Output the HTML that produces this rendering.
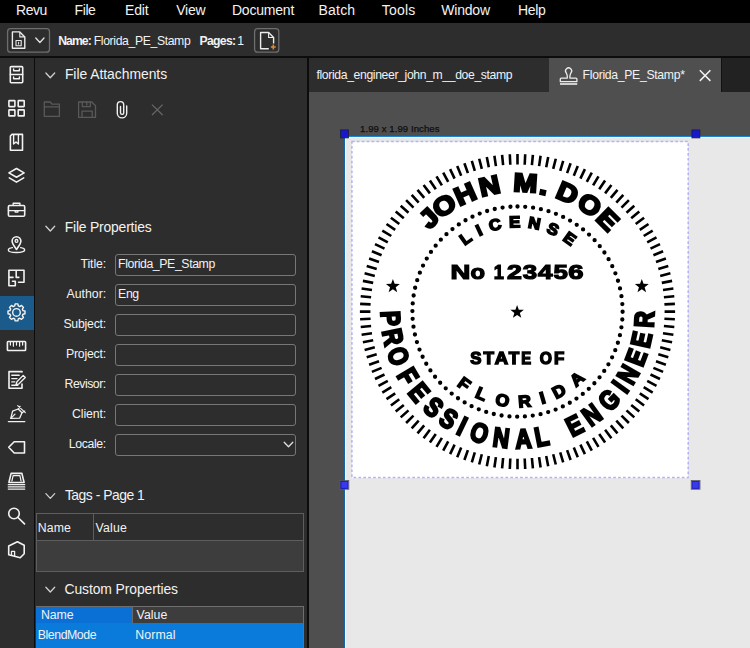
<!DOCTYPE html><html><head><meta charset="utf-8"><title>Revu</title><style>
*{box-sizing:border-box;margin:0;padding:0}
html,body{width:750px;height:648px;overflow:hidden;background:#2b2b2b}
body{font-family:"Liberation Sans",sans-serif;color:#f2f2f2;position:relative;font-size:12px}
.a{position:absolute}
.t{position:absolute;white-space:nowrap}
.inp{position:absolute;left:114.500px;width:181px;height:21.500px;border:1.4px solid #777;border-radius:3px;background:#2d2d2d}
svg{position:absolute;left:0;top:0;overflow:visible}
</style></head><body>
<div class="a" style="left:0px;top:0px;width:750px;height:23px;background:#000;"></div>
<div class="a" style="left:0px;top:23px;width:750px;height:33px;background:#2d2d2d;"></div>
<div class="a" style="left:0px;top:56px;width:750px;height:2px;background:#0c0c0c;"></div>
<div class="a" style="left:0px;top:58px;width:34px;height:590px;background:#2d2d2d;"></div>
<div class="a" style="left:34px;top:58px;width:1.4px;height:590px;background:#0c0c0c;"></div>
<div class="a" style="left:35.4px;top:58px;width:271.6px;height:590px;background:#2d2d2d;"></div>
<div class="a" style="left:307px;top:58px;width:2px;height:590px;background:#0c0c0c;"></div>
<div class="a" style="left:309px;top:58px;width:240px;height:34px;background:#2d2d2d;"></div>
<div class="a" style="left:549px;top:58px;width:172px;height:34px;background:#4f4f4f;"></div>
<div class="a" style="left:721px;top:58px;width:29px;height:34px;background:#222;"></div>
<div class="a" style="left:720.5px;top:58px;width:1px;height:33.5px;background:#111;"></div>
<div class="a" style="left:309px;top:91.5px;width:441px;height:556.5px;background:#4f4f4f;"></div>
<div class="a" style="left:0px;top:295.8px;width:34px;height:34.1px;background:#1a5b8b;"></div>
<div class="a" style="left:344px;top:136px;width:406px;height:512px;background:#e8e8e8;"></div>
<div class="a" style="left:344px;top:136px;width:406px;height:1px;background:#1c86cf;"></div>
<div class="a" style="left:344px;top:136px;width:1px;height:512px;background:#1168a8;"></div>
<div class="a" style="left:345px;top:137px;width:405px;height:1px;background:#fafafa;"></div>
<div class="a" style="left:345px;top:137px;width:1px;height:511px;background:#fafafa;"></div>
<div class="a" style="left:352px;top:141.5px;width:336px;height:336px;background:#fff;"></div>
<div class="t" style="left:16.09px;top:3.35px;font-size:14px;line-height:14px;letter-spacing:-0.488px;color:#f2f2f2;">Revu</div>
<div class="t" style="left:74.59px;top:3.35px;font-size:14px;line-height:14px;letter-spacing:-0.413px;color:#f2f2f2;">File</div>
<div class="t" style="left:124.99px;top:3.35px;font-size:14px;line-height:14px;letter-spacing:-0.168px;color:#f2f2f2;">Edit</div>
<div class="t" style="left:176.19px;top:3.35px;font-size:14px;line-height:14px;letter-spacing:-0.224px;color:#f2f2f2;">View</div>
<div class="t" style="left:231.89px;top:3.35px;font-size:14px;line-height:14px;letter-spacing:-0.198px;color:#f2f2f2;">Document</div>
<div class="t" style="left:318.59px;top:3.35px;font-size:14px;line-height:14px;letter-spacing:0.180px;color:#f2f2f2;">Batch</div>
<div class="t" style="left:381.79px;top:3.35px;font-size:14px;line-height:14px;letter-spacing:0.184px;color:#f2f2f2;">Tools</div>
<div class="t" style="left:441.29px;top:3.35px;font-size:14px;line-height:14px;letter-spacing:-0.215px;color:#f2f2f2;">Window</div>
<div class="t" style="left:518.09px;top:3.35px;font-size:14px;line-height:14px;letter-spacing:-0.391px;color:#f2f2f2;">Help</div>
<div class="t" style="left:58.21px;top:35.07px;font-size:12.2px;line-height:12.2px;letter-spacing:-0.926px;color:#f2f2f2;font-weight:700;">Name:</div>
<div class="t" style="left:93.71px;top:35.07px;font-size:12.2px;line-height:12.2px;letter-spacing:-0.354px;color:#f2f2f2;">Florida_PE_Stamp</div>
<div class="t" style="left:199.61px;top:35.07px;font-size:12.2px;line-height:12.2px;letter-spacing:-0.704px;color:#f2f2f2;font-weight:700;">Pages:</div>
<div class="t" style="left:237.21px;top:35.07px;font-size:12.2px;line-height:12.2px;letter-spacing:0.000px;color:#f2f2f2;">1</div>
<div class="t" style="left:316.51px;top:68.97px;font-size:12.2px;line-height:12.2px;letter-spacing:-0.362px;color:#f2f2f2;">florida_engineer_john_m__doe_stamp</div>
<div class="t" style="left:582.61px;top:68.97px;font-size:12.2px;line-height:12.2px;letter-spacing:-0.297px;color:#f2f2f2;">Florida_PE_Stamp*</div>
<div class="t" style="left:360.08px;top:123.77px;font-size:9.6px;line-height:9.6px;letter-spacing:0.064px;color:#101010;-webkit-text-stroke:.25px #101010;">1.99 x 1.99 Inches</div>
<div class="t" style="left:64.90px;top:68.13px;font-size:13.9px;line-height:13.9px;letter-spacing:-0.030px;color:#f2f2f2;">File Attachments</div>
<div class="t" style="left:64.70px;top:221.33px;font-size:13.9px;line-height:13.9px;letter-spacing:-0.186px;color:#f2f2f2;">File Properties</div>
<div class="t" style="left:64.90px;top:489.33px;font-size:13.9px;line-height:13.9px;letter-spacing:-0.489px;color:#f2f2f2;">Tags - Page 1</div>
<div class="t" style="left:64.50px;top:582.63px;font-size:13.9px;line-height:13.9px;letter-spacing:-0.094px;color:#f2f2f2;">Custom Properties</div>
<div class="inp" style="top:254.2px"></div>
<div class="t" style="left:80.50px;top:258.09px;font-size:12.3px;line-height:12.3px;letter-spacing:-0.100px;color:#f2f2f2;">Title:</div>
<div class="inp" style="top:284.2px"></div>
<div class="t" style="left:66.60px;top:288.09px;font-size:12.3px;line-height:12.3px;letter-spacing:-0.010px;color:#f2f2f2;">Author:</div>
<div class="inp" style="top:314.2px"></div>
<div class="t" style="left:63.40px;top:318.09px;font-size:12.3px;line-height:12.3px;letter-spacing:-0.235px;color:#f2f2f2;">Subject:</div>
<div class="inp" style="top:344.2px"></div>
<div class="t" style="left:65.90px;top:348.09px;font-size:12.3px;line-height:12.3px;letter-spacing:-0.200px;color:#f2f2f2;">Project:</div>
<div class="inp" style="top:374.2px"></div>
<div class="t" style="left:64.60px;top:378.09px;font-size:12.3px;line-height:12.3px;letter-spacing:-0.502px;color:#f2f2f2;">Revisor:</div>
<div class="inp" style="top:404.2px"></div>
<div class="t" style="left:72.10px;top:408.09px;font-size:12.3px;line-height:12.3px;letter-spacing:-0.128px;color:#f2f2f2;">Client:</div>
<div class="inp" style="top:434.2px"></div>
<div class="t" style="left:68.80px;top:438.09px;font-size:12.3px;line-height:12.3px;letter-spacing:-0.377px;color:#f2f2f2;">Locale:</div>
<div class="t" style="left:118.10px;top:258.09px;font-size:12.3px;line-height:12.3px;letter-spacing:-0.402px;color:#f2f2f2;">Florida_PE_Stamp</div>
<div class="t" style="left:118.10px;top:288.09px;font-size:12.3px;line-height:12.3px;letter-spacing:-0.393px;color:#f2f2f2;">Eng</div>
<div class="a" style="left:35.5px;top:513.3px;width:268.7px;height:27.7px;background:#2d2d2d;border:1px solid #5e5e5e"></div>
<div class="a" style="left:93px;top:514px;width:1px;height:27px;background:#5e5e5e;"></div>
<div class="a" style="left:35.5px;top:541px;width:268.7px;height:31px;background:#3d3d3d;border:1px solid #5e5e5e;border-top:none"></div>
<div class="t" style="left:37.70px;top:521.89px;font-size:12.3px;line-height:12.3px;letter-spacing:0.130px;color:#f2f2f2;">Name</div>
<div class="t" style="left:95.60px;top:521.89px;font-size:12.3px;line-height:12.3px;letter-spacing:0.188px;color:#f2f2f2;">Value</div>
<div class="a" style="left:35.5px;top:606.3px;width:268.7px;height:41.7px;background:#3d3d3d;border:1px solid #6e6e6e;border-bottom:none"></div>
<div class="a" style="left:35.5px;top:607.3px;width:96px;height:15.7px;background:#0b70d5;"></div>
<div class="a" style="left:131.5px;top:607.3px;width:1px;height:15.7px;background:#6a6a6a;"></div>
<div class="a" style="left:35.5px;top:623.2px;width:267.7px;height:25px;background:#0a7bdb;"></div>
<div class="t" style="left:41.00px;top:608.79px;font-size:12.3px;line-height:12.3px;letter-spacing:-0.104px;color:#f2f2f2;">Name</div>
<div class="t" style="left:136.60px;top:608.79px;font-size:12.3px;line-height:12.3px;letter-spacing:0.038px;color:#f2f2f2;">Value</div>
<div class="t" style="left:37.80px;top:629.49px;font-size:12.3px;line-height:12.3px;letter-spacing:-0.441px;color:#f2f2f2;">BlendMode</div>
<div class="t" style="left:135.30px;top:629.49px;font-size:12.3px;line-height:12.3px;letter-spacing:0.092px;color:#f2f2f2;">Normal</div>
<svg width="750" height="648" viewBox="0 0 750 648">
<rect x="7.600" y="28.700" width="41.900" height="23.500" rx="3" fill="none" stroke="#6e6e6e" stroke-width="1.300"/>
<g stroke="#ececec" fill="none" stroke-width="1.400" stroke-linejoin="round"><path d="M12.400 31.900h7.400l5 5V48.300H12.400Z"/><path d="M19.800 31.900v5h5" stroke-width="1.100"/><rect x="16" y="40.500" width="5.200" height="5.200" stroke-width="1.100"/><path d="M18.600 41.800v2.800" stroke-width="1"/></g>
<path d="M35.80 38.10L39.90 42.50L44.00 38.10" fill="none" stroke="#dedede" stroke-width="1.4" stroke-linecap="round" stroke-linejoin="round"/>
<rect x="254.600" y="28.700" width="24.200" height="23.500" rx="3" fill="none" stroke="#6e6e6e" stroke-width="1.300"/>
<g stroke="#ececec" fill="none" stroke-width="1.400" stroke-linejoin="round"><path d="M273.600 43.500V37.500l-5-5H260.600V48.700H268.800"/><path d="M268.600 32.500v5h5" stroke-width="1.100"/></g>
<path d="M273.300 44.600v4.800M270.900 47h4.800" stroke="#e08a32" stroke-width="1.500"/>
<g stroke="#f2f2f2" fill="none" stroke-width="1.6" stroke-linejoin="round" stroke-linecap="round"><rect x="10.300" y="66.600" width="12.400" height="16.200" rx="1"/><path d="M10.300 74.500H22.700M13.600 69v1.700h5.800V69M13.600 77v1.700h5.800V77" stroke-width="1.400"/></g>
<g stroke="#f2f2f2" fill="none" stroke-width="1.6" stroke-linejoin="round" stroke-linecap="round"><rect x="8.900" y="100.600" width="6" height="6" rx=".5"/><rect x="18.200" y="100.600" width="6" height="6" rx=".5"/><rect x="8.900" y="109.900" width="6" height="6" rx=".5"/><rect x="18.200" y="109.900" width="6" height="6" rx=".5"/></g>
<g stroke="#f2f2f2" fill="none" stroke-width="1.6" stroke-linejoin="round" stroke-linecap="round"><path d="M10.400 150.300V136l1.600-1.600H22.500V150.300Z"/><path d="M13.600 134.700v9.300l2.400-2 2.400 2v-9.300" stroke-width="1.400"/></g>
<g stroke="#f2f2f2" fill="none" stroke-width="1.6" stroke-linejoin="round" stroke-linecap="round"><path d="M16.500 168.500l7.600 4.400-7.600 4.400-7.600-4.400Z"/><path d="M9.300 177.900l7.200 4.200 7.200-4.200"/></g>
<g stroke="#f2f2f2" fill="none" stroke-width="1.6" stroke-linejoin="round" stroke-linecap="round"><rect x="8.400" y="205.500" width="16.300" height="10.800" rx="1.300"/><path d="M13.200 205.300v-2.100h6.700v2.100M8.400 210.600H24.700M15.200 210.600v1.500h2.700v-1.500" stroke-width="1.400"/></g>
<g stroke="#f2f2f2" fill="none" stroke-width="1.6" stroke-linejoin="round" stroke-linecap="round"><path d="M16.500 249.400c-2.500-3.300-4.400-5.600-4.400-8.300a4.400 4.400 0 0 1 8.800 0c0 2.700-1.900 5-4.400 8.300Z"/><circle cx="16.500" cy="240.900" r="1.400" stroke-width="1.300"/><path d="M12.400 247.700c-2.500.4-4.100 1.300-4.100 2.300 0 1.500 3.700 2.500 8.200 2.500s8.200-1 8.200-2.500c0-1-1.600-1.900-4.100-2.300" stroke-width="1.300"/></g>
<g stroke="#f2f2f2" fill="none" stroke-width="1.6" stroke-linejoin="round" stroke-linecap="round"><path d="M24 282.300V270.300H8.900V285.700H15.300M18.600 282.300H24M15.300 285.700V281.200M8.900 277.400H13M16.200 270.300V277.400H18.800M12.500 281.200H15.300"/></g>
<g stroke="#f2f2f2" fill="none" stroke-width="1.6" stroke-linejoin="round" stroke-linecap="round"><rect x="7.400" y="341.500" width="18.200" height="9" rx=".8"/><path d="M10.400 341.500v3.600M13.400 341.500v4.700M16.500 341.500v3.600M19.600 341.500v4.700M22.600 341.500v3.600" stroke-width="1.200"/></g>
<g stroke="#f2f2f2" fill="none" stroke-width="1.6" stroke-linejoin="round" stroke-linecap="round"><path d="M22 372V371.600H9V388.300H22V384"/><path d="M11.800 375.300h7.400M11.800 378.600h5.200M11.800 381.900h3M11.800 385.200h6" stroke-width="1.400"/><path d="M16 384.800l.9-3.100 6.300-6.300 2.100 2.100-6.300 6.300Z" stroke-width="1.300" fill="#2d2d2d"/></g>
<g stroke="#f2f2f2" fill="none" stroke-width="1.6" stroke-linejoin="round" stroke-linecap="round"><path d="M8.400 421.600H24.800" stroke-width="1.400"/><path d="M10.800 418.400l1.800-7.200 5.600-2.200 3.800 3.800-2.400 5.400Z" stroke-width="1.300"/><path d="M10.800 418.400l4.200-4.200M18.200 409l1.900-2.700M22 412.800l2.700-1.700M17.700 405.600l7.600 7" stroke-width="1.200"/></g>
<g stroke="#f2f2f2" fill="none" stroke-width="1.6" stroke-linejoin="round" stroke-linecap="round"><path d="M8.700 447.300l5.500-5.600H24.500v11.300H14.200Z"/></g>
<g stroke="#f2f2f2" fill="none" stroke-width="1.6" stroke-linejoin="round" stroke-linecap="round"><path d="M8.900 482.500l2.200-9.100h10.800l2.200 9.100Z"/><path d="M11.900 481.100l1.200-5.500h6.800l1.200 5.500" stroke-width="1.200"/><path d="M8.300 484.700H24.700M8.300 486.900H24.700M8.300 489.100H24.700" stroke-width="1.300"/></g>
<g stroke="#f2f2f2" fill="none" stroke-width="1.6" stroke-linejoin="round" stroke-linecap="round"><circle cx="14" cy="513.500" r="5.300"/><path d="M18 517.500l6.500 6.300" stroke-width="1.700"/></g>
<g stroke="#f2f2f2" fill="none" stroke-width="1.6" stroke-linejoin="round" stroke-linecap="round"><path d="M8.700 546l8.700-4.200 6.800 3.500v8.400l-4 4-11.500-3Z"/><path d="M11.500 555.200v-3.800h3.100v4.600" stroke-width="1.300"/></g>
<g stroke="#f4f4f4" fill="none" stroke-width="1.400" stroke-linejoin="round"><path d="M22.96 310.61L24.99 311.03L24.99 313.77L22.96 314.19L22.33 315.70L23.47 317.43L21.53 319.37L19.80 318.23L18.29 318.86L17.87 320.89L15.13 320.89L14.71 318.86L13.20 318.23L11.47 319.37L9.53 317.43L10.67 315.70L10.04 314.19L8.01 313.77L8.01 311.03L10.04 310.61L10.67 309.10L9.53 307.37L11.47 305.43L13.20 306.57L14.71 305.94L15.13 303.91L17.87 303.91L18.29 305.94L19.80 306.57L21.53 305.43L23.47 307.37L22.33 309.10Z"/><circle cx="16.5" cy="312.4" r="3.800"/></g>
<path d="M45.90 73.05L50.30 77.75L54.70 73.05" fill="none" stroke="#d0d0d0" stroke-width="1.3" stroke-linecap="round" stroke-linejoin="round"/>
<path d="M45.90 226.25L50.30 230.95L54.70 226.25" fill="none" stroke="#d0d0d0" stroke-width="1.3" stroke-linecap="round" stroke-linejoin="round"/>
<path d="M45.90 493.65L50.30 498.35L54.70 493.65" fill="none" stroke="#d0d0d0" stroke-width="1.3" stroke-linecap="round" stroke-linejoin="round"/>
<path d="M45.90 587.25L50.30 591.95L54.70 587.25" fill="none" stroke="#d0d0d0" stroke-width="1.3" stroke-linecap="round" stroke-linejoin="round"/>
<g stroke="#595959" fill="none" stroke-width="1.300" stroke-linejoin="round" stroke-linecap="round"><path d="M44.300 102h6l1.600 2.200h7.500v12.200H44.300Z"/><path d="M44.300 106.800H59.400"/></g>
<g stroke="#595959" fill="none" stroke-width="1.300" stroke-linejoin="round" stroke-linecap="round"><path d="M78.600 102h13.200l3.700 3.700v11.700H78.600Z"/><path d="M82.300 102v4.600h8V102M86.800 102v3M82 117.400v-6.200h10.200v6.200"/></g>
<path d="M126.700 106v7.200a4.700 4.700 0 0 1-9.400 0v-8.400a3.200 3.200 0 0 1 6.400 0v8a1.600 1.600 0 0 1-3.200 0v-6.400" fill="none" stroke="#f0f0f0" stroke-width="1.400" stroke-linecap="round"/>
<path d="M152 104.600l10.600 10.400M162.600 104.600l-10.600 10.400" stroke="#666" stroke-width="1.300" fill="none"/>
<path d="M284.20 442.20L288.50 446.80L292.80 442.20" fill="none" stroke="#dedede" stroke-width="1.3" stroke-linecap="round" stroke-linejoin="round"/>
<g stroke="#ececec" fill="none" stroke-width="1.300" stroke-linejoin="round"><path d="M567.300 78.100V76.400C567.300 74.900 566.600 74 566.200 72.800A3.050 3.050 0 1 1 571 72.800C570.600 74 569.900 74.900 569.900 76.400V78.100H575.900Q576.900 78.100 576.900 79.100V81.700H560.300V79.100Q560.300 78.100 561.300 78.100Z"/></g>
<rect x="560" y="83" width="17.200" height="2" fill="#cfcfcf"/>
<path d="M699.800 70.300l10.600 10.600M710.400 70.300l-10.600 10.600" stroke="#f2f2f2" stroke-width="1.500" fill="none"/>
<rect x="351.900" y="141.400" width="336.300" height="336.200" fill="none" stroke="#b2b2fb" stroke-width="1.500" stroke-dasharray="2.700 2.200"/>
</svg><svg width="750" height="648" viewBox="0 0 750 648" style="will-change:transform">
<path d="M517.5 164.5L517.5 154.0M524.7 164.7L525.2 154.2M531.9 165.2L532.9 154.8M539.1 166.1L540.6 155.7M546.2 167.3L548.2 157.0M553.2 168.9L555.8 158.7M560.2 170.8L563.2 160.8M567.1 173.1L570.6 163.2M573.8 175.7L577.8 166.0M580.4 178.6L584.9 169.1M586.8 181.9L591.8 172.6M593.1 185.4L598.5 176.4M599.2 189.3L605.1 180.6M605.1 193.4L611.4 185.0M610.8 197.9L617.5 189.8M616.3 202.6L623.3 194.8M621.5 207.6L628.9 200.2M626.5 212.8L634.3 205.8M631.2 218.3L639.3 211.6M635.7 224.0L644.1 217.7M639.8 229.9L648.5 224.0M643.7 236.0L652.7 230.6M647.2 242.3L656.5 237.3M650.5 248.7L660.0 244.2M653.4 255.3L663.1 251.3M656.0 262.0L665.9 258.5M658.3 268.9L668.3 265.9M660.2 275.9L670.4 273.3M661.8 282.9L672.1 280.9M663.0 290.0L673.4 288.5M663.9 297.2L674.3 296.2M664.4 304.4L674.9 303.9M664.6 311.6L675.1 311.6M664.4 318.8L674.9 319.3M663.9 326.0L674.3 327.0M663.0 333.2L673.4 334.7M661.8 340.3L672.1 342.3M660.2 347.3L670.4 349.9M658.3 354.3L668.3 357.3M656.0 361.2L665.9 364.7M653.4 367.9L663.1 371.9M650.5 374.5L660.0 379.0M647.2 380.9L656.5 385.9M643.7 387.2L652.7 392.6M639.8 393.3L648.5 399.2M635.7 399.2L644.1 405.5M631.2 404.9L639.3 411.6M626.5 410.4L634.3 417.4M621.5 415.6L628.9 423.0M616.3 420.6L623.3 428.4M610.8 425.3L617.5 433.4M605.1 429.8L611.4 438.2M599.2 433.9L605.1 442.6M593.1 437.8L598.5 446.8M586.8 441.3L591.8 450.6M580.4 444.6L584.9 454.1M573.8 447.5L577.8 457.2M567.1 450.1L570.6 460.0M560.2 452.4L563.2 462.4M553.2 454.3L555.8 464.5M546.2 455.9L548.2 466.2M539.1 457.1L540.6 467.5M531.9 458.0L532.9 468.4M524.7 458.5L525.2 469.0M517.5 458.7L517.5 469.2M510.3 458.5L509.8 469.0M503.1 458.0L502.1 468.4M495.9 457.1L494.4 467.5M488.8 455.9L486.8 466.2M481.8 454.3L479.2 464.5M474.8 452.4L471.8 462.4M467.9 450.1L464.4 460.0M461.2 447.5L457.2 457.2M454.6 444.6L450.1 454.1M448.2 441.3L443.2 450.6M441.9 437.8L436.5 446.8M435.8 433.9L429.9 442.6M429.9 429.8L423.6 438.2M424.2 425.3L417.5 433.4M418.7 420.6L411.7 428.4M413.5 415.6L406.1 423.0M408.5 410.4L400.7 417.4M403.8 404.9L395.7 411.6M399.3 399.2L390.9 405.5M395.2 393.3L386.5 399.2M391.3 387.2L382.3 392.6M387.8 380.9L378.5 385.9M384.5 374.5L375.0 379.0M381.6 367.9L371.9 371.9M379.0 361.2L369.1 364.7M376.7 354.3L366.7 357.3M374.8 347.3L364.6 349.9M373.2 340.3L362.9 342.3M372.0 333.2L361.6 334.7M371.1 326.0L360.7 327.0M370.6 318.8L360.1 319.3M370.4 311.6L359.9 311.6M370.6 304.4L360.1 303.9M371.1 297.2L360.7 296.2M372.0 290.0L361.6 288.5M373.2 282.9L362.9 280.9M374.8 275.9L364.6 273.3M376.7 268.9L366.7 265.9M379.0 262.0L369.1 258.5M381.6 255.3L371.9 251.3M384.5 248.7L375.0 244.2M387.8 242.3L378.5 237.3M391.3 236.0L382.3 230.6M395.2 229.9L386.5 224.0M399.3 224.0L390.9 217.7M403.8 218.3L395.7 211.6M408.5 212.8L400.7 205.8M413.5 207.6L406.1 200.2M418.7 202.6L411.7 194.8M424.2 197.9L417.5 189.8M429.9 193.4L423.6 185.0M435.8 189.3L429.9 180.6M441.9 185.4L436.5 176.4M448.2 181.9L443.2 172.6M454.6 178.6L450.1 169.1M461.2 175.7L457.2 166.0M467.9 173.1L464.4 163.2M474.8 170.8L471.8 160.8M481.8 168.9L479.2 158.7M488.8 167.3L486.8 157.0M495.9 166.1L494.4 155.7M503.1 165.2L502.1 154.8M510.3 164.7L509.8 154.2" stroke="#000" stroke-width="2.6" fill="none"/>
<circle cx="517.5" cy="311.6" r="105.1" fill="none" stroke="#000" stroke-width="4.3" stroke-linecap="round" stroke-dasharray="0 7.8615" transform="rotate(-90 517.5 311.6)"/>
<g font-family="Liberation Sans, sans-serif" font-weight="700" fill="#000" stroke="#000" stroke-linejoin="miter">
<text transform="translate(434.44 224.99) rotate(-43.80) scale(1.12 1)" x="-6.44" font-size="25.6" stroke-width="2.3">J</text>
<text transform="translate(449.19 212.94) rotate(-34.70) scale(1.12 1)" x="-9.95" font-size="25.6" stroke-width="2.3">O</text>
<text transform="translate(468.69 201.97) rotate(-24.00) scale(1.12 1)" x="-9.23" font-size="25.6" stroke-width="2.3">H</text>
<text transform="translate(491.32 194.49) rotate(-12.60) scale(1.12 1)" x="-9.23" font-size="25.6" stroke-width="2.3">N</text>
<text transform="translate(525.03 191.84) rotate(3.60) scale(1.12 1)" x="-10.66" font-size="25.6" stroke-width="2.3">M</text>
<text transform="translate(542.45 194.22) rotate(12.00) scale(1.12 1)" x="-3.53" font-size="25.6" stroke-width="2.3">.</text>
<text transform="translate(564.39 201.14) rotate(23.00) scale(1.12 1)" x="-9.56" font-size="25.6" stroke-width="2.3">D</text>
<text transform="translate(584.78 212.23) rotate(34.10) scale(1.12 1)" x="-9.95" font-size="25.6" stroke-width="2.3">O</text>
<text transform="translate(601.91 226.30) rotate(44.70) scale(1.12 1)" x="-8.88" font-size="25.6" stroke-width="2.3">E</text>
<text transform="translate(381.13 319.46) rotate(86.70) scale(0.83 1)" x="-9.51" font-size="27.2" stroke-width="2.3">P</text>
<text transform="translate(383.79 339.53) rotate(78.20) scale(0.83 1)" x="-10.44" font-size="27.2" stroke-width="2.3">R</text>
<text transform="translate(389.55 359.44) rotate(69.50) scale(0.83 1)" x="-10.57" font-size="27.2" stroke-width="2.3">O</text>
<text transform="translate(400.04 381.34) rotate(59.30) scale(0.83 1)" x="-8.72" font-size="27.2" stroke-width="2.3">F</text>
<text transform="translate(412.10 398.49) rotate(50.50) scale(0.83 1)" x="-9.44" font-size="27.2" stroke-width="2.3">E</text>
<text transform="translate(427.34 414.22) rotate(41.30) scale(0.83 1)" x="-8.92" font-size="27.2" stroke-width="2.3">S</text>
<text transform="translate(443.50 426.42) rotate(32.80) scale(0.83 1)" x="-8.92" font-size="27.2" stroke-width="2.3">S</text>
<text transform="translate(458.05 434.58) rotate(25.80) scale(0.83 1)" x="-3.77" font-size="27.2" stroke-width="2.3">I</text>
<text transform="translate(476.65 441.95) rotate(17.40) scale(0.83 1)" x="-10.57" font-size="27.2" stroke-width="2.3">O</text>
<text transform="translate(500.14 447.09) rotate(7.30) scale(0.83 1)" x="-9.81" font-size="27.2" stroke-width="2.3">N</text>
<text transform="translate(523.93 448.05) rotate(-2.70) scale(0.83 1)" x="-9.79" font-size="27.2" stroke-width="2.3">A</text>
<text transform="translate(543.80 445.64) rotate(-11.10) scale(0.83 1)" x="-8.80" font-size="27.2" stroke-width="2.3">L</text>
<text transform="translate(578.88 433.63) rotate(-26.70) scale(0.83 1)" x="-9.44" font-size="27.2" stroke-width="2.3">E</text>
<text transform="translate(597.41 422.39) rotate(-35.80) scale(0.83 1)" x="-9.81" font-size="27.2" stroke-width="2.3">N</text>
<text transform="translate(615.76 406.49) rotate(-46.00) scale(0.83 1)" x="-10.30" font-size="27.2" stroke-width="2.3">G</text>
<text transform="translate(627.73 392.28) rotate(-53.80) scale(0.83 1)" x="-3.77" font-size="27.2" stroke-width="2.3">I</text>
<text transform="translate(636.16 379.28) rotate(-60.30) scale(0.83 1)" x="-9.81" font-size="27.2" stroke-width="2.3">N</text>
<text transform="translate(645.11 360.33) rotate(-69.10) scale(0.83 1)" x="-9.44" font-size="27.2" stroke-width="2.3">E</text>
<text transform="translate(650.81 341.40) rotate(-77.40) scale(0.83 1)" x="-9.44" font-size="27.2" stroke-width="2.3">E</text>
<text transform="translate(653.87 319.46) rotate(-86.70) scale(0.83 1)" x="-10.44" font-size="27.2" stroke-width="2.3">R</text>
<text transform="translate(468.85 242.63) rotate(-35.20) scale(1.06 1)" x="-5.11" font-size="15.8" stroke-width="1.6">L</text>
<text transform="translate(481.43 235.30) rotate(-25.30) scale(1.06 1)" x="-2.19" font-size="15.8" stroke-width="1.6">I</text>
<text transform="translate(496.51 229.85) rotate(-14.40) scale(1.06 1)" x="-5.81" font-size="15.8" stroke-width="1.6">C</text>
<text transform="translate(515.14 227.23) rotate(-1.60) scale(1.06 1)" x="-5.48" font-size="15.8" stroke-width="1.6">E</text>
<text transform="translate(533.31 228.69) rotate(10.80) scale(1.06 1)" x="-5.70" font-size="15.8" stroke-width="1.6">N</text>
<text transform="translate(550.88 234.08) rotate(23.30) scale(1.06 1)" x="-5.18" font-size="15.8" stroke-width="1.6">S</text>
<text transform="translate(566.75 243.06) rotate(35.70) scale(1.06 1)" x="-5.48" font-size="15.8" stroke-width="1.6">E</text>
<text transform="translate(461.17 388.84) rotate(36.10) scale(1.06 1)" x="-5.32" font-size="16.6" stroke-width="1.6">F</text>
<text transform="translate(479.53 399.34) rotate(23.40) scale(1.06 1)" x="-5.37" font-size="16.6" stroke-width="1.6">L</text>
<text transform="translate(501.56 405.86) rotate(9.60) scale(1.06 1)" x="-6.45" font-size="16.6" stroke-width="1.6">O</text>
<text transform="translate(525.50 406.86) rotate(-4.80) scale(1.06 1)" x="-6.37" font-size="16.6" stroke-width="1.6">R</text>
<text transform="translate(544.17 403.40) rotate(-16.20) scale(1.06 1)" x="-2.30" font-size="16.6" stroke-width="1.6">I</text>
<text transform="translate(561.79 396.32) rotate(-27.60) scale(1.06 1)" x="-6.20" font-size="16.6" stroke-width="1.6">D</text>
<text transform="translate(580.85 383.20) rotate(-41.50) scale(1.06 1)" x="-5.98" font-size="16.6" stroke-width="1.6">A</text>
<text transform="translate(460.50 278.60) scale(1.316 1)" x="-7.53" font-size="20.9" stroke-width="1.2">N</text>
<text transform="translate(477.65 278.60) scale(1.140 1)" x="-6.38" font-size="20.9" stroke-width="1.2">o</text>
<text transform="translate(499.15 278.60) scale(0.871 1)" x="-6.18" font-size="20.9" stroke-width="1.2">1</text>
<text transform="translate(514.35 278.60) scale(1.278 1)" x="-5.76" font-size="20.9" stroke-width="1.2">2</text>
<text transform="translate(529.75 278.60) scale(1.237 1)" x="-5.67" font-size="20.9" stroke-width="1.2">3</text>
<text transform="translate(545.35 278.60) scale(1.241 1)" x="-5.91" font-size="20.9" stroke-width="1.2">4</text>
<text transform="translate(560.75 278.60) scale(1.237 1)" x="-5.84" font-size="20.9" stroke-width="1.2">5</text>
<text transform="translate(575.95 278.60) scale(1.312 1)" x="-5.82" font-size="20.9" stroke-width="1.2">6</text>
<text transform="translate(475.75 363.60) scale(0.996 1)" x="-5.54" font-size="16.9" stroke-width="1.4">S</text>
<text transform="translate(488.75 363.60) scale(1.013 1)" x="-5.17" font-size="16.9" stroke-width="1.4">T</text>
<text transform="translate(501.40 363.60) scale(1.092 1)" x="-6.08" font-size="16.9" stroke-width="1.4">A</text>
<text transform="translate(514.05 363.60) scale(1.013 1)" x="-5.17" font-size="16.9" stroke-width="1.4">T</text>
<text transform="translate(526.45 363.60) scale(0.874 1)" x="-5.86" font-size="16.9" stroke-width="1.4">E</text>
<text transform="translate(545.85 363.60) scale(0.928 1)" x="-6.57" font-size="16.9" stroke-width="1.4">O</text>
<text transform="translate(559.30 363.60) scale(1.000 1)" x="-5.42" font-size="16.9" stroke-width="1.4">F</text>
<polygon points="517.10,304.90 518.80,309.65 523.85,309.81 519.86,312.90 521.27,317.74 517.10,314.90 512.93,317.74 514.34,312.90 510.35,309.81 515.40,309.65" stroke="none"/>
<polygon points="392.90,279.00 394.66,283.87 399.84,284.04 395.75,287.23 397.19,292.21 392.90,289.30 388.61,292.21 390.05,287.23 385.96,284.04 391.14,283.87" stroke="none"/>
<polygon points="641.80,279.00 643.56,283.87 648.74,284.04 644.65,287.23 646.09,292.21 641.80,289.30 637.51,292.21 638.95,287.23 634.86,284.04 640.04,283.87" stroke="none"/>
</g>
</svg><svg width="750" height="648" viewBox="0 0 750 648">
<rect x="340.4" y="129.9" width="8" height="8" fill="#1818cf" stroke="#1d1d40" stroke-width=".8"/>
<rect x="691.9" y="129.9" width="8" height="8" fill="#1818cf" stroke="#1d1d40" stroke-width=".8"/>
<rect x="340.0" y="480.5" width="8.800" height="8.800" fill="none" stroke="#5a5a60" stroke-width=".8"/>
<rect x="340.9" y="481.4" width="7" height="7" fill="#3838f0" stroke="#1a1ab4" stroke-width="1"/>
<rect x="691.2" y="480.5" width="8.800" height="8.800" fill="none" stroke="#5a5a60" stroke-width=".8"/>
<rect x="692.1" y="481.4" width="7" height="7" fill="#3838f0" stroke="#1a1ab4" stroke-width="1"/>
</svg>
</body></html>
